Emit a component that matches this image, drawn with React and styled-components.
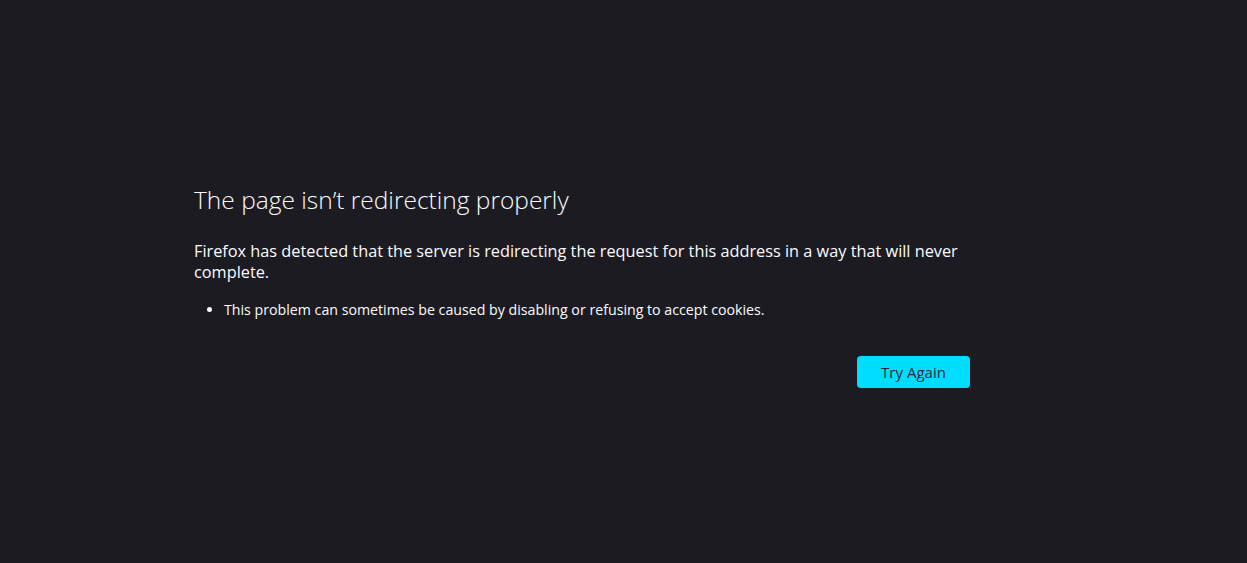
import React from "react";
import styled, { createGlobalStyle } from "styled-components";

const GlobalStyle = createGlobalStyle`
  html, body {
    margin: 0;
    height: 100%;
    background: #1c1b22;
  }
  #root {
    height: 100%;
  }
`;

const Page = styled.main`
  height: 100%;
  display: flex;
  align-items: center;
  font-family: "Open Sans", "Noto Sans", sans-serif;
  color: #fbfbfe;
`;

const Container = styled.div`
  width: 776px;
  margin-left: 194px;
  margin-top: 9px;
`;

const Title = styled.h1`
  margin: 0 0 24.5px;
  font-size: 24.5px;
  font-weight: 300;
  line-height: 32px;
`;

const Desc = styled.p`
  margin: 0 0 17.5px;
  font-size: 16.3px;
  line-height: 21px;
`;

const Hints = styled.ul`
  margin: 0;
  padding-left: 30px;
  font-size: 14.2px;
  line-height: 20px;
`;

const Actions = styled.div`
  display: flex;
  justify-content: flex-end;
  margin-top: 36px;
`;

const Button = styled.button`
  width: 113px;
  height: 32px;
  border: none;
  border-radius: 4px;
  background: #00ddff;
  color: #2b2a33;
  font-family: inherit;
  font-size: 15px;
  cursor: pointer;
`;

export default function App() {
  return (
    <>
      <GlobalStyle />
      <Page>
        <Container>
          <Title>The page isn’t redirecting properly</Title>
          <Desc>
            Firefox has detected that the server is redirecting the request for this address in a way that will never complete.
          </Desc>
          <Hints>
            <li>This problem can sometimes be caused by disabling or refusing to accept cookies.</li>
          </Hints>
          <Actions>
            <Button>Try Again</Button>
          </Actions>
        </Container>
      </Page>
    </>
  );
}
